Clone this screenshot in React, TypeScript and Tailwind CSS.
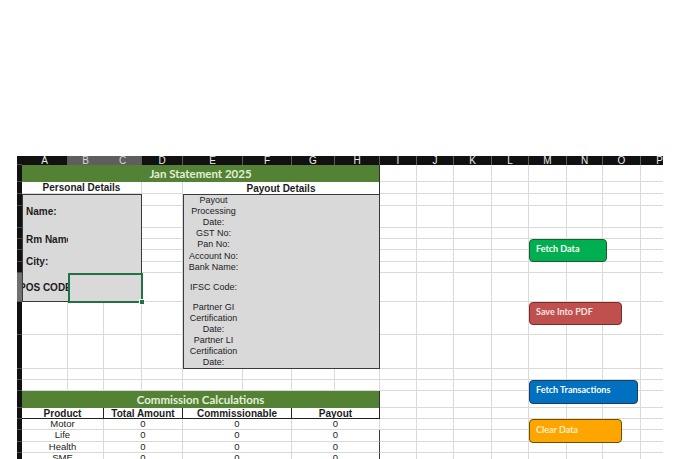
const COLUMNS = ["A", "B", "C", "D", "E", "F", "G", "H", "I", "J", "K", "L", "M", "N", "O", "P"];

// row heights of the sheet, header row first
const ROW_COUNT = 20;

const PAYOUT_LABELS = [
  { text: "Payout Processing Date:", h: "h-[33px]" },
  { text: "GST No:", h: "h-[11px]" },
  { text: "Pan No:", h: "h-[11px]" },
  { text: "Account No:", h: "h-[12px]" },
  { text: "Bank Name:", h: "h-[11px]" },
  { text: "IFSC Code:", h: "h-[29px]" },
  { text: "Partner GI Certification Date:", h: "h-[33px]" },
  { text: "Partner LI Certification Date:", h: "h-[33px]" },
];

const PRODUCTS = [
  { row: "row-start-16", name: "Motor", edge: "border-r-[#d9d9d9]" },
  { row: "row-start-17", name: "Life", edge: "border-r-[#3a3a3a]" },
  { row: "row-start-18", name: "Health", edge: "border-r-[#3a3a3a]" },
  { row: "row-start-19", name: "SME", edge: "border-r-[#3a3a3a]" },
];

const cell = "flex items-center justify-center border-r border-b border-[#d9d9d9]";

function MacroButton({ label, className }: { label: string; className: string }) {
  return (
    <div
      className={`absolute left-[507px] rounded-[4px] border px-[6px] font-['Lato',sans-serif] text-[9px] font-bold leading-[11px] ${className}`}
    >
      {label}
    </div>
  );
}

export default function App() {
  return (
    <div className="h-[459px] w-[680px] overflow-hidden bg-white pl-[17px] pt-[156px] font-['Liberation_Sans',Arial,sans-serif] text-[#1c1c1c]">
      <div className="flex">
        {/* row headers, mostly cut off */}
        <div className="grid w-[5px] grid-rows-[9px_17px_12px_12px_22px_11px_11px_12px_11px_29px_33px_34px_11px_11px_17px_11px_11px_12px_11px_11px]">
          {Array.from({ length: ROW_COUNT }).map((_, i) => (
            <div
              key={i}
              className={i === 9 ? "border-b border-[#555] bg-[#707070]" : "border-b border-[#4a4a4a] bg-[#111]"}
            />
          ))}
        </div>

        <div className="w-[641px] overflow-hidden">
          {/* column headers */}
          <div className="grid h-[9px] grid-cols-[46px_36px_38px_41px_60px_49px_43px_45px_37px_37px_38px_37px_38px_36px_38px_38px] bg-[#111]">
            {COLUMNS.map((c) => (
              <div
                key={c}
                className={`flex items-center justify-center overflow-hidden border-r border-[#5c5c5c] text-[10px] leading-none ${
                  c === "B" || c === "C" ? "bg-[#5e5e5e] text-[#d8d8d8]" : "text-[#ededed]"
                }`}
              >
                {c}
              </div>
            ))}
          </div>

          <div className="relative">
            <div className="grid h-[294px] grid-cols-[46px_36px_38px_41px_60px_49px_43px_45px_37px_37px_38px_37px_38px_36px_38px_38px] grid-rows-[17px_12px_12px_22px_11px_11px_12px_11px_29px_33px_34px_11px_11px_17px_11px_11px_12px_11px_11px] auto-rows-[11px]">
              <div className="col-span-8 col-start-1 row-start-1 flex items-center justify-center border-r border-[#2f2f2f] bg-[#548235] font-['Lato',sans-serif] text-[11.5px] font-bold text-[#e2efda]">
                Jan Statement 2025
              </div>

              <div className={`col-span-3 col-start-1 row-start-2 bg-white text-[10px] font-bold ${cell}`}>
                Personal Details
              </div>
              <div className="col-span-4 col-start-5 row-start-2 flex items-center justify-center border-r border-[#2f2f2f] bg-white text-[10px] font-bold">
                Payout Details
              </div>

              {/* personal details box */}
              <div className="relative col-span-3 col-start-1 row-span-7 row-start-3 grid grid-rows-[33px_22px_23px_28px] border border-[#3a3a3a] bg-[#d9d9d9] text-[10px] font-bold">
                <div className="flex w-[45px] items-center overflow-hidden whitespace-nowrap pl-[3px]">Name:</div>
                <div className="flex w-[45px] items-center overflow-hidden whitespace-nowrap pl-[3px]">Rm Name:</div>
                <div className="flex w-[45px] items-center overflow-hidden whitespace-nowrap pl-[3px]">City:</div>
                <div className="flex w-[45px] items-center overflow-hidden whitespace-nowrap">
                  <span className="ml-[-4px]">POS CODE</span>
                </div>
                <div className="absolute left-[45px] top-[78px] h-[30px] w-[75px] border-2 border-[#217346]">
                  <div className="absolute -bottom-[4px] -right-[4px] h-[6px] w-[6px] border border-white bg-[#217346]" />
                </div>
              </div>

              {/* payout details box */}
              <div className="col-span-4 col-start-5 row-span-9 row-start-3 flex flex-col border border-[#3a3a3a] bg-[#d9d9d9]">
                {PAYOUT_LABELS.map((l) => (
                  <div
                    key={l.text}
                    className={`flex w-[59px] items-center justify-center text-center text-[9px] leading-[11px] text-[#222] ${l.h}`}
                  >
                    {l.text}
                  </div>
                ))}
              </div>

              <div className="col-span-8 col-start-1 row-start-14 flex items-center justify-center border-r border-[#2f2f2f] bg-[#548235] font-['Lato',sans-serif] text-[11.5px] font-bold text-[#e2efda]">
                Commission Calculations
              </div>

              <div className="col-span-2 col-start-1 row-start-15 flex items-center justify-center border-r border-b border-[#222] text-[10px] font-bold">
                Product
              </div>
              <div className="col-span-2 col-start-3 row-start-15 flex items-center justify-center border-r border-b border-[#222] text-[10px] font-bold">
                Total Amount
              </div>
              <div className="col-span-2 col-start-5 row-start-15 flex items-center justify-center border-r border-b border-[#222] text-[10px] font-bold">
                Commissionable
              </div>
              <div className="col-span-2 col-start-7 row-start-15 flex items-center justify-center border-r border-b border-[#222] text-[10px] font-bold">
                Payout
              </div>

              {PRODUCTS.map((p) => (
                <div key={p.name} className="contents">
                  <div className={`col-span-2 col-start-1 text-[9.5px] ${p.row} ${cell}`}>{p.name}</div>
                  <div className={`col-span-2 col-start-3 text-[9.5px] ${p.row} ${cell}`}>0</div>
                  <div className={`col-span-2 col-start-5 text-[9.5px] ${p.row} ${cell}`}>0</div>
                  <div className={`col-span-2 col-start-7 border-r border-b border-[#d9d9d9] text-[9.5px] flex items-center justify-center ${p.row} ${p.edge}`}>0</div>
                </div>
              ))}

              {/* the rest of the sheet: empty cells fill every free slot */}
              {Array.from({ length: 200 }).map((_, i) => (
                <div key={`e${i}`} className="border-r border-b border-[#dadada]" />
              ))}
            </div>

            <MacroButton label="Fetch Data" className="top-[74px] h-[23px] w-[78px] border-[#1d5b33] bg-[#00b050] pt-[3px] text-white" />
            <MacroButton label="Save Into PDF" className="top-[137px] h-[23px] w-[93px] border-[#7a2b29] bg-[#c0504d] pt-[3px] text-[#fbe4e4]" />
            <MacroButton label="Fetch Transactions" className="top-[215px] h-[24px] w-[109px] border-[#1e3c62] bg-[#0070c0] pt-[3px] text-white" />
            <MacroButton label="Clear Data" className="top-[254px] h-[24px] w-[93px] border-[#6b5200] bg-[#ffa500] pt-[4px] text-[#fff0c4]" />
          </div>
        </div>
      </div>
    </div>
  );
}
